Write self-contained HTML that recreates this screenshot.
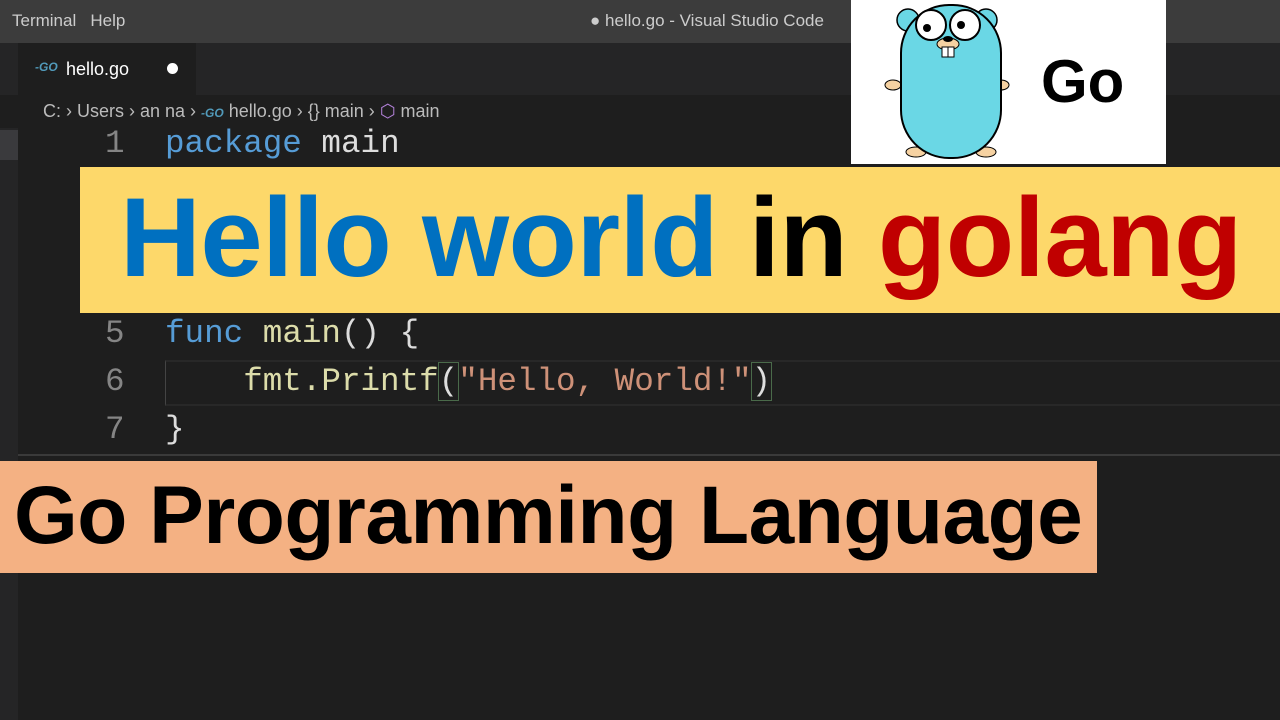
<!DOCTYPE html>
<html><head><meta charset="utf-8"><style>
*{margin:0;padding:0;box-sizing:border-box}
body{width:1280px;height:720px;overflow:hidden;background:#1e1e1e;position:relative;font-family:"Liberation Sans",sans-serif}
.abs{position:absolute}
.mono{font-family:"Liberation Mono",monospace;font-size:32.6px;white-space:pre}
</style></head><body>
<div class="abs" style="left:0;top:0;width:1280px;height:43px;background:#3c3c3c"></div>
<div class="abs" style="left:12px;top:11px;color:#ccc;font-size:17px">Terminal&nbsp;&nbsp;&nbsp;Help</div>
<div class="abs" style="left:590px;top:11px;color:#ccc;font-size:17px">● hello.go - Visual Studio Code</div>
<div class="abs" style="left:0;top:43px;width:1280px;height:52px;background:#252526"></div>
<div class="abs" style="left:18px;top:43px;width:178px;height:52px;background:#1e1e1e"></div>
<div class="abs" style="left:35px;top:60px;color:#519aba;font-size:12px;font-weight:bold;font-style:italic">-GO</div>
<div class="abs" style="left:66px;top:59px;color:#fff;font-size:18px">hello.go</div>
<div class="abs" style="left:167px;top:63px;width:11px;height:11px;border-radius:50%;background:#fff"></div>
<div class="abs" style="left:0;top:95px;width:1280px;height:33px;background:#1e1e1e"></div>
<div class="abs" style="left:43px;top:101px;color:#bbb;font-size:18px;white-space:pre">C: › Users › an na › <span style="color:#519aba;font-size:12px;font-weight:bold;font-style:italic">-GO</span> hello.go › {} main › <span style="color:#b180d7">⬡</span> main</div>
<div class="abs" style="left:0;top:128px;width:18px;height:592px;background:#252526"></div>
<div class="abs" style="left:0;top:130px;width:18px;height:30px;background:#3a3a3d"></div>
<div class="abs mono" style="left:105px;top:125px;color:#858585">1</div>
<div class="abs mono" style="left:165px;top:125px"><span style="color:#569cd6">package</span> <span style="color:#ddd">main</span></div>
<div class="abs mono" style="left:105px;top:315px;color:#858585">5</div>
<div class="abs mono" style="left:165px;top:315px"><span style="color:#569cd6">func</span> <span style="color:#dcdcaa">main</span><span style="color:#ddd">() {</span></div>
<div class="abs" style="left:165px;top:360px;width:1115px;height:46px;border-top:2px solid #282828;border-bottom:2px solid #282828;border-left:1px solid #444"></div>
<div class="abs mono" style="left:105px;top:363px;color:#858585">6</div>
<div class="abs mono" style="left:165px;top:363px;color:#ddd">    <span style="color:#dcdcaa">fmt.Printf</span><span style="outline:1px solid #4a6a4a">(</span><span style="color:#ce9178">"Hello, World!"</span><span style="outline:1px solid #4a6a4a">)</span></div>
<div class="abs mono" style="left:105px;top:411px;color:#858585">7</div>
<div class="abs mono" style="left:165px;top:411px;color:#ddd">}</div>
<div class="abs" style="left:18px;top:454px;width:1262px;height:2px;background:#3a3a3a"></div>
<div class="abs" style="left:80px;top:167px;width:1200px;height:146px;background:#fdd86a"></div>
<div class="abs" style="left:120px;top:173px;font-size:112px;font-weight:bold;white-space:nowrap;letter-spacing:-0.5px"><span style="color:#0070c0">Hello world</span> <span style="color:#000">in</span> <span style="color:#c00000">golang</span></div>
<div class="abs" style="left:0;top:461px;width:1097px;height:112px;background:#f4b183"></div>
<div class="abs" style="left:14px;top:469px;font-size:82px;font-weight:bold;color:#000;white-space:nowrap;letter-spacing:-0.5px">Go Programming Language</div>
<div class="abs" style="left:851px;top:0;width:315px;height:164px;background:#fff"></div>
<svg class="abs" style="left:851px;top:0" width="315" height="164" viewBox="0 0 315 164">
<circle cx="57" cy="20" r="11" fill="#6ad7e5" stroke="#000" stroke-width="1.5"/>
<circle cx="135" cy="20" r="11" fill="#6ad7e5" stroke="#000" stroke-width="1.5"/>
<ellipse cx="42" cy="85" rx="8" ry="5" fill="#f6d2a2" stroke="#000"/>
<ellipse cx="150" cy="85" rx="8" ry="5" fill="#f6d2a2" stroke="#000"/>
<ellipse cx="65" cy="152" rx="10" ry="5" fill="#f6d2a2" stroke="#000"/>
<ellipse cx="135" cy="152" rx="10" ry="5" fill="#f6d2a2" stroke="#000"/>
<rect x="50" y="5" width="100" height="153" rx="48" fill="#6ad7e5" stroke="#000" stroke-width="2"/>
<circle cx="80" cy="25" r="15" fill="#fff" stroke="#000" stroke-width="2"/>
<circle cx="114" cy="25" r="15" fill="#fff" stroke="#000" stroke-width="2"/>
<circle cx="76" cy="28" r="4" fill="#000"/><circle cx="110" cy="25" r="4" fill="#000"/>
<ellipse cx="97" cy="44" rx="11" ry="6" fill="#f6d2a2" stroke="#000"/>
<ellipse cx="97" cy="39" rx="5" ry="3" fill="#000"/>
<rect x="91" y="47" width="6" height="10" fill="#fff" stroke="#000"/><rect x="97" y="47" width="6" height="10" fill="#fff" stroke="#000"/>
<text x="190" y="102" font-family="Liberation Sans" font-weight="bold" font-size="60" fill="#000">Go</text>
</svg>
</body></html>
